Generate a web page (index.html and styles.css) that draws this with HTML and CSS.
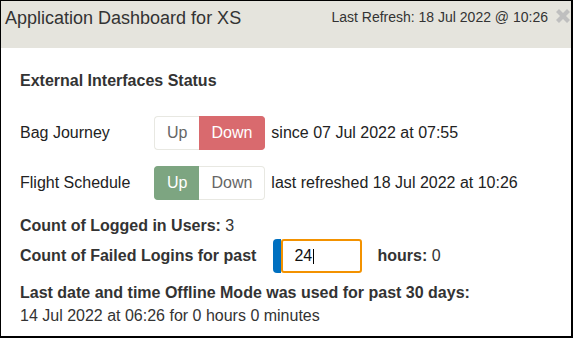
FILE: index.html
```html
<!DOCTYPE html>
<html lang="en">
<head>
<meta charset="utf-8">
<title>Application Dashboard for XS</title>
<link rel="stylesheet" href="styles.css">
</head>
<body>
<div class="dialog">
  <div class="header">
    <div class="title">Application Dashboard for XS</div>
    <div class="header-right">
      <span class="refresh">Last Refresh: 18 Jul 2022 @ 10:26</span>
      <svg class="close" width="14" height="14" viewBox="0 0 14 14" aria-label="Close">
        <path d="M0 3 L3 0 L7 4 L11 0 L14 3 L10 7 L14 11 L11 14 L7 10 L3 14 L0 11 L4 7 Z" fill="#bfbfbf"/>
      </svg>
    </div>
  </div>
  <div class="content">
    <div class="section-title">External Interfaces Status</div>
    <div class="status-row first">
      <div class="label">Bag Journey</div>
      <div class="btn-group">
        <span class="seg">Up</span>
        <span class="seg down-active">Down</span>
      </div>
      <div class="status-text">since 07 Jul 2022 at 07:55</div>
    </div>
    <div class="status-row second">
      <div class="label">Flight Schedule</div>
      <div class="btn-group">
        <span class="seg up-active">Up</span>
        <span class="seg">Down</span>
      </div>
      <div class="status-text">last refreshed 18 Jul 2022 at 10:26</div>
    </div>
    <div class="line users"><b>Count of Logged in Users:</b> 3</div>
    <div class="failed-row">
      <b>Count of Failed Logins for past</b>
      <div class="input-wrap">
        <span class="input-marker"></span>
        <div class="input-box">24<span class="caret"></span></div>
      </div>
      <span class="hours"><b>hours:</b> 0</span>
    </div>
    <div class="line offline-title"><b>Last date and time Offline Mode was used for past 30 days:</b></div>
    <div class="line offline-value">14 Jul 2022 at 06:26 for 0 hours 0 minutes</div>
  </div>
</div>
</body>
</html>
```

FILE: styles.css
```css
html, body {
  margin: 0;
  padding: 0;
  background: #ffffff;
}

body {
  font-family: "Liberation Sans", Arial, sans-serif;
  color: #333333;
}

.dialog {
  box-sizing: border-box;
  width: 573px;
  height: 338px;
  border: 1px solid #000000;
  border-right-width: 2px;
  border-bottom-width: 2px;
  background: #ffffff;
  overflow: hidden;
}

.header {
  box-sizing: border-box;
  height: 47px;
  background: #e5e4dd;
  display: flex;
  justify-content: space-between;
  align-items: flex-start;
  padding: 7px 1px 0 4px;
}

.title {
  font-size: 18px;
  line-height: 21px;
  color: #333333;
}

.header-right {
  display: flex;
  align-items: flex-start;
  gap: 8px;
  margin-top: 1px;
}

.refresh {
  font-size: 14px;
  line-height: 16px;
  color: #333333;
}

.close {
  display: block;
  flex-shrink: 0;
}

.content {
  padding: 23px 0 0 19px;
  font-size: 16px;
  line-height: 20px;
}

.section-title {
  font-weight: bold;
}

.status-row {
  display: flex;
  align-items: center;
  height: 34px;
}

.status-row.first {
  margin-top: 25px;
}

.status-row.second {
  margin-top: 16px;
}

.label {
  width: 134px;
  color: #222222;
}

.btn-group {
  display: flex;
  height: 34px;
}

.seg {
  box-sizing: border-box;
  height: 34px;
  line-height: 32px;
  padding: 0 12px;
  border: 1px solid #e8e8e2;
  color: #666666;
  background: #ffffff;
}

.seg:first-child {
  border-radius: 4px 0 0 4px;
  border-right: none;
}

.seg:last-child {
  border-radius: 0 4px 4px 0;
  border-left: none;
}

.seg.down-active {
  background: #d96a6e;
  border-color: #d96a6e;
  color: #ffffff;
}

.seg.up-active {
  background: #7da581;
  border-color: #7da581;
  color: #ffffff;
}

.status-text {
  margin-left: 6px;
  color: #222222;
}

.line.users {
  margin-top: 16px;
}

.failed-row {
  display: flex;
  align-items: center;
  height: 34px;
  margin-top: 3px;
}

.input-wrap {
  display: flex;
  margin-left: 17px;
  height: 34px;
}

.input-marker {
  width: 8px;
  height: 34px;
  background: #0070c0;
  border-radius: 4px 0 0 4px;
}

.input-box {
  box-sizing: border-box;
  width: 81px;
  height: 34px;
  border: 2px solid #f39200;
  border-radius: 3px;
  padding-left: 11px;
  font-size: 16px;
  line-height: 30px;
  color: #111111;
  display: flex;
  align-items: center;
}

.caret {
  display: inline-block;
  width: 1px;
  height: 15px;
  background: #000000;
  margin-left: 1px;
}

.hours {
  margin-left: 15px;
}

.line.offline-title {
  margin-top: 10px;
}

.line.offline-value {
  margin-top: 3px;
}
```
